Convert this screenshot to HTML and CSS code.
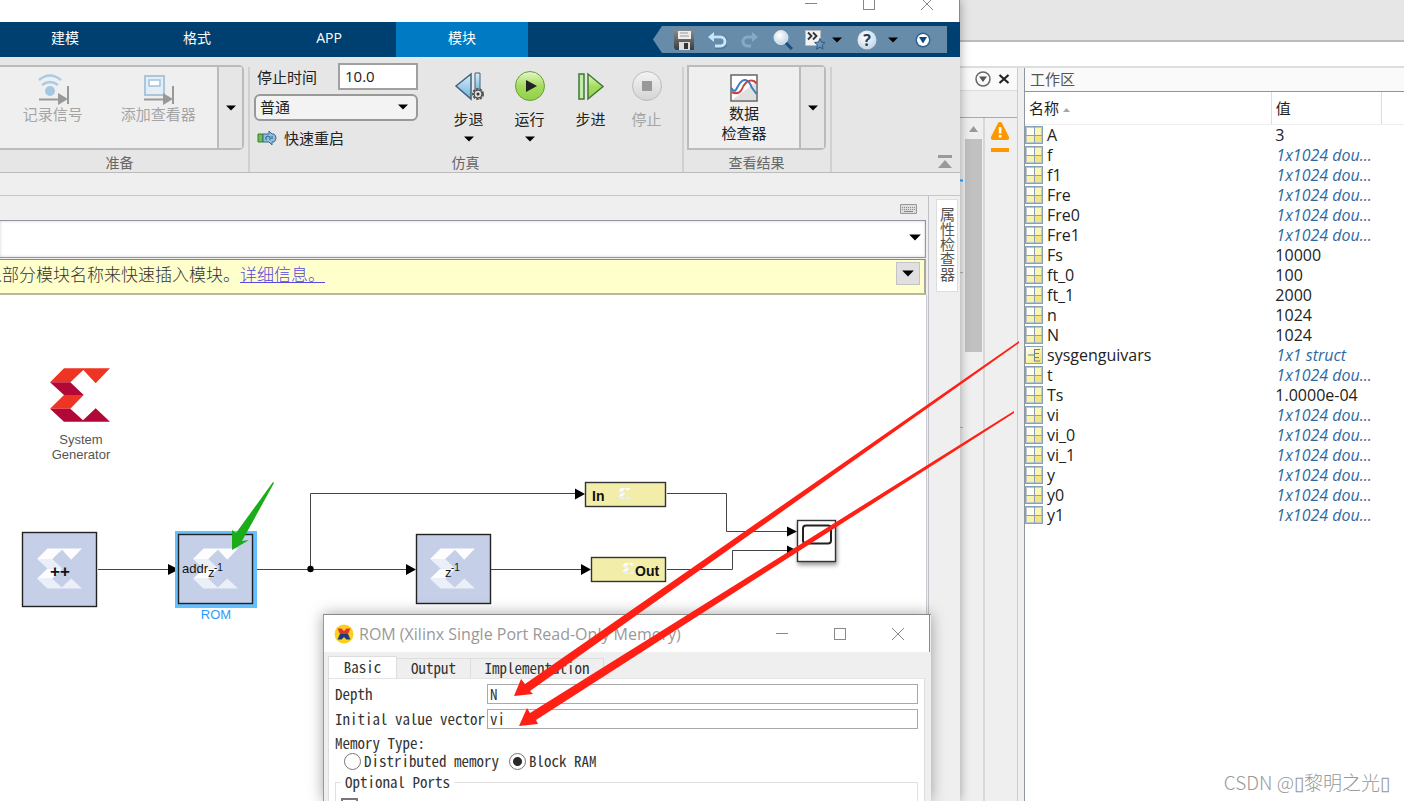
FILE: index.html
```html
<!DOCTYPE html>
<html lang="zh-CN">
<head>
<meta charset="utf-8">
<title>Simulink</title>
<link rel="stylesheet" href="styles.css">
</head>
<body>
<svg class="defs" aria-hidden="true">
  <defs>
    <linearGradient id="gy" x1="0" y1="0" x2="1" y2="1"><stop offset="0.1" stop-color="#fffdf0"/><stop offset="0.5" stop-color="#fbf3a8"/><stop offset="1" stop-color="#f0dc6a"/></linearGradient>
    <linearGradient id="gblue" x1="0" y1="0" x2="0" y2="1"><stop offset="0" stop-color="#d9eefa"/><stop offset="1" stop-color="#6fb1dc"/></linearGradient>
    <linearGradient id="ggreen" x1="0" y1="0" x2="0" y2="1"><stop offset="0" stop-color="#e4f8cc"/><stop offset="0.5" stop-color="#a6dc5e"/><stop offset="1" stop-color="#8fd148"/></linearGradient>
    <linearGradient id="ggray" x1="0" y1="0" x2="0" y2="1"><stop offset="0" stop-color="#f4f4f4"/><stop offset="1" stop-color="#d4d4d4"/></linearGradient>
    <linearGradient id="gdisk" x1="0" y1="0" x2="0" y2="1"><stop offset="0" stop-color="#8b8b8b"/><stop offset="1" stop-color="#3c3c3c"/></linearGradient>
    <radialGradient id="glens" cx="0.4" cy="0.35" r="0.7"><stop offset="0" stop-color="#ffffff"/><stop offset="1" stop-color="#bfd4e4"/></radialGradient>
    <symbol id="matrix" viewBox="0 0 18 18">
      <rect width="18" height="18" fill="#86a1b8"/>
      <path d="M1 1h16v16H1z" fill="#b9c9cf"/>
      <path d="M2 2h7v7H2z" fill="#fffef4"/><path d="M10 2h6v7h-6z" fill="#fcf5b4"/><path d="M2 10h7v6H2z" fill="#fbf2a6"/><path d="M10 10h6v6h-6z" fill="#f5e37e"/>
      <path d="M9.500 1v16M1 9.500h16" stroke="#86a1b8"/>
    </symbol>
    <symbol id="struct" viewBox="0 0 18 18">
      <rect x="0.500" y="0.500" width="17" height="17" fill="url(#gy)" stroke="#86a1b8"/>
      <path d="M3 9h6M9.500 3v12M9 3.500h6M9 7.500h5M9 11.500h5M9 15h6" stroke="#6684a0" fill="none"/>
    </symbol>
    <symbol id="xlogo" viewBox="0 0 180 160">
      <path class="light" d="M42 0H180L137 45L100 5L61 42H0ZM42 80H101L61 121H0Z"/>
      <path class="dark" d="M0 42H61L101 80H42ZM0 121H61L99 156L137 120L180 160H42Z"/>
    </symbol>
    <symbol id="caret" viewBox="0 0 10 6"><path d="M0 0.500H10L5 5.500Z"/></symbol>
  </defs>
</svg>

<div class="desktop">
  <main class="app">
    <header class="titlebar">
      <button class="winbtn" aria-label="最小化"><svg width="14" height="14"><path d="M1 6.500h12"/></svg></button>
      <button class="winbtn" aria-label="最大化"><svg width="14" height="14"><rect x="1.500" y="1.500" width="11" height="11"/></svg></button>
      <button class="winbtn" aria-label="关闭"><svg width="14" height="14"><path d="M1 1l12 12M13 1L1 13"/></svg></button>
    </header>

    <nav class="tabbar">
      <button class="tab">建模</button>
      <button class="tab">格式</button>
      <button class="tab">APP</button>
      <button class="tab active">模块</button>
      <div class="quick">
        <button aria-label="保存"><svg width="20" height="20" viewBox="0 0 20 20"><path d="M0 0h20v20H2l-2-2z" fill="url(#gdisk)"/><path d="M4 1h13v8H4z" fill="#eee"/><path d="M6 3h8M6 6h9" stroke="#999"/><path d="M5 12h11v8H5z" fill="#ddd"/><path d="M10 13h4v6h-4z" fill="#333"/></svg></button>
        <button aria-label="撤销"><svg width="20" height="20" viewBox="0 0 20 20"><path d="M5 7h9a4.500 4.500 0 0 1 0 10H8" fill="none" stroke="#234f78" stroke-width="4" opacity="0.3"/><path d="M5 7h8.500a4.500 4.500 0 0 1 0 9H8" fill="none" stroke="#c6e6f7" stroke-width="3"/><path d="M1 7l6-5v10z" fill="#c6e6f7"/></svg></button>
        <button aria-label="重做"><svg width="20" height="20" viewBox="0 0 20 20"><path d="M13 7H7.500a4.500 4.500 0 0 0 0 9H11" fill="none" stroke="#86aac6" stroke-width="3"/><path d="M18 7l-6-5v10z" fill="#86aac6"/></svg></button>
        <button aria-label="搜索"><svg width="20" height="20" viewBox="0 0 20 20"><path d="M12 12l7 7" stroke="#1c4c80" stroke-width="3"/><circle cx="8" cy="7.500" r="7" fill="url(#glens)" stroke="#d9e5ee"/></svg></button>
        <button aria-label="收藏"><svg width="20" height="20" viewBox="0 0 20 20"><path d="M0.500 0.500h15v15H.5z" fill="#f2f2f2" stroke="#bbb"/><path d="M3 2.500l3.500 3.500L3 9.500M8 2.500l3.500 3.500L8 9.500" fill="none" stroke="#333" stroke-width="1.800"/><path d="M15 8.500l1.400 3.600 3.600.4-2.800 2.600.8 4-3-2-3.400 2 .8-4-2.800-2.600 3.800-.4z" fill="#6a97bd" stroke="#31587f"/></svg></button>
        <button aria-label="收藏菜单"><svg class="caret" width="10" height="6"><use href="#caret"/></svg></button>
        <button aria-label="帮助"><svg width="20" height="20" viewBox="0 0 20 20"><circle cx="10" cy="10" r="9.500" fill="url(#glens)"/><text x="10" y="16" class="helpq">?</text></svg></button>
        <button aria-label="帮助菜单"><svg class="caret" width="10" height="6"><use href="#caret"/></svg></button>
        <button aria-label="更多"><svg width="16" height="16" viewBox="0 0 16 16"><circle cx="8" cy="8" r="7.500" fill="#2d628f"/><circle cx="8" cy="8" r="6" fill="#fff"/><path d="M4 5h8l-4 6.500z" fill="#0f487c"/></svg></button>
      </div>
    </nav>

    <section class="ribbon">
      <div class="group prepare">
        <div class="gallery open-left">
          <button class="tool off"><svg width="32" height="32" viewBox="0 0 32 32"><path d="M2 6q11-9 22 0M5 11q8-6 16 0" fill="none" stroke="#a9cbe4" stroke-width="2.500"/><circle cx="13" cy="17" r="5" fill="#a5c8e2"/><path d="M2 25.500h20M31 12v18" stroke="#999" stroke-width="2"/><path d="M21 19l10 6-10 6z" fill="#999"/></svg><span>记录信号</span></button>
          <button class="tool off"><svg width="32" height="32" viewBox="0 0 32 32"><path d="M3 2h19v19H3z" fill="#e6eef5" stroke="#a9c6dc" stroke-width="2"/><path d="M7 6h11v6H7z" fill="#fff" stroke="#9fc4df" stroke-width="1.500"/><path d="M2 25.500h20M31 12v18" stroke="#999" stroke-width="2"/><path d="M21 19l10 6-10 6z" fill="#999"/></svg><span>添加查看器</span></button>
          <button class="more" aria-label="展开准备"><svg class="caret" width="10" height="6"><use href="#caret"/></svg></button>
        </div>
        <div class="caption">准备</div>
      </div>
      <div class="group simulate">
        <div class="simrow">
          <div class="settings">
            <div class="stop"><label for="stop">停止时间</label><input id="stop" value="10.0"></div>
            <div class="mode"><select aria-label="仿真模式"><option>普通</option></select><svg class="caret" width="10" height="6"><use href="#caret"/></svg></div>
            <button class="restart"><svg width="21" height="16" viewBox="0 0 21 16"><path d="M1 4h5v8H1z" fill="#6cc04a" stroke="#3b7a2a"/><path d="M6 4h6V1l3 3h2q4 4 0 8h-2v3l-3-3H6z" fill="#8dbfe0" stroke="#3b688c"/><path d="M9 10V7q2-2 4 0v3M15 6v3" stroke="#315c80" fill="none"/></svg><span>快速重启</span></button>
          </div>
          <button class="run"><svg width="32" height="32" viewBox="0 0 32 32"><path d="M3 16L18 4v25z" fill="url(#gblue)" stroke="#40617c" stroke-width="1.500"/><path d="M22 3h5v19h-5z" fill="url(#gblue)" stroke="#40617c"/><circle cx="25" cy="24" r="5" fill="#ddd" stroke="#555" stroke-width="2" stroke-dasharray="2.500 1"/><circle cx="25" cy="24" r="4" fill="#ddd" stroke="#444"/><circle cx="25" cy="24" r="1.500" fill="#333"/></svg><span>步退</span><svg class="caret" width="10" height="6"><use href="#caret"/></svg></button>
          <button class="run"><svg width="32" height="32" viewBox="0 0 32 32"><circle cx="16" cy="16" r="14.500" fill="url(#ggreen)" stroke="#689e38"/><path d="M12 10l11 6-11 6z" fill="#222"/></svg><span>运行</span><svg class="caret" width="10" height="6"><use href="#caret"/></svg></button>
          <button class="run"><svg width="32" height="32" viewBox="0 0 32 32"><path d="M4 4h5v25H4z" fill="#c5eba8" stroke="#3c7a36" stroke-width="1.500"/><path d="M13 4v25l15-12.500z" fill="url(#ggreen)" stroke="#3c7a36" stroke-width="1.500"/></svg><span>步进</span></button>
          <button class="run off"><svg width="32" height="32" viewBox="0 0 32 32"><circle cx="16" cy="16" r="14.500" fill="url(#ggray)" stroke="#bbb"/><path d="M11 11h10v10H11z" fill="#999"/></svg><span>停止</span></button>
        </div>
        <div class="caption">仿真</div>
      </div>
      <div class="group results">
        <div class="gallery">
          <button class="tool"><svg width="28" height="28" viewBox="0 0 28 28"><path d="M1 1h26v26H1z" fill="#fff" stroke="#666" stroke-width="1.500"/><path d="M2 26L26 8v18z" fill="#e0e0e0"/><path d="M1.500 14q3 6 6-1q4-8 8-7t6 7l5 7" fill="none" stroke="#3c7fc0" stroke-width="2"/><path d="M1.500 18q7 3 10-2q4-10 10-9.500q3 0 5 3" fill="none" stroke="#c94442" stroke-width="2"/></svg><span>数据<br>检查器</span></button>
          <button class="more" aria-label="展开查看结果"><svg class="caret" width="10" height="6"><use href="#caret"/></svg></button>
        </div>
        <div class="caption">查看结果</div>
      </div>
      <button class="collapse" aria-label="折叠"><svg width="14" height="14"><path d="M0 0h14v3H0zM7 5l7 8H0z" fill="#999"/></svg></button>
    </section>

    <div class="strip"></div>

    <div class="work">
      <div class="editor">
        <div class="keys"><svg width="17" height="10" viewBox="0 0 17 10"><path d="M0.500 0.500h16v9H.5z" fill="#ddd" stroke="#999"/><path d="M2 3.500h13M2 5.500h13" stroke="#888" stroke-dasharray="1 1"/><path d="M4 7.500h9" stroke="#888"/></svg></div>
        <div class="address"><button aria-label="路径"><svg class="caret" width="12" height="7"><use href="#caret"/></svg></button></div>
        <div class="banner"><p>入部分模块名称来快速插入模块。<a href="#more">详细信息。</a></p><button aria-label="提示菜单"><svg class="caret" width="12" height="7"><use href="#caret"/></svg></button></div>
        <div class="canvas">
          <svg class="diagram" width="928" height="506" viewBox="0 295 928 506">
            <g class="brand"><use href="#xlogo" x="50" y="368" width="60" height="54"/></g>
            <text x="81" y="444" class="label">System</text>
            <text x="81" y="459" class="label">Generator</text>

            <g class="wire">
              <path d="M98 569.500H170M257 569.500H406M310.500 569.500V493.500H576M491 569.500H582M667 493.500H726.500V531.500H788M667 569.500H732.500V550.500H788"/>
            </g>
            <g class="heads">
              <path d="M168 564l11 5.500-11 5.500zM406 564l10 5.500-10 5.500zM575 488.500l10 5.500-10 5.500zM581 564l10 5.500-10 5.500zM787 526.500l10 5-10 5zM787 545.500l10 5-10 5z"/>
              <circle cx="310.500" cy="569" r="3.200"/>
            </g>

            <rect x="22.500" y="532.500" width="74" height="74" class="block"/>
            <g class="ghost"><use href="#xlogo" x="37" y="548" width="45" height="41"/></g>
            <text x="60" y="577" class="plus">++</text>

            <rect x="177" y="533" width="78" height="73" class="halo"/>
            <rect x="178.500" y="534.500" width="74" height="69" class="block"/>
            <g class="ghost"><use href="#xlogo" x="193" y="548" width="45" height="41"/></g>
            <text x="182" y="573" class="port">addr</text>
            <text x="208" y="577" class="port">z</text><text x="214" y="571" class="sup">-1</text>
            <text x="216" y="619" class="romname">ROM</text>

            <rect x="416.500" y="534.500" width="74" height="69" class="block"/>
            <g class="ghost"><use href="#xlogo" x="430" y="548" width="45" height="41"/></g>
            <text x="445" y="577" class="port">z</text><text x="451" y="571" class="sup">-1</text>

            <rect x="585.500" y="482.500" width="80" height="24" class="gate"/>
            <g class="ghost"><use href="#xlogo" x="618" y="488" width="13" height="11"/></g>
            <text x="592" y="501" class="gatename">In</text>
            <rect x="591.500" y="557.500" width="74" height="24" class="gate"/>
            <g class="ghost"><use href="#xlogo" x="622" y="563" width="13" height="11"/></g>
            <text x="635" y="576" class="gatename">Out</text>

            <rect x="797.500" y="520.500" width="38" height="41" class="scope"/>
            <rect x="803" y="525.500" width="28" height="18" rx="3" class="screen"/>
          </svg>
        </div>
      </div>
      <aside class="side"><button class="inspector">属性检查器</button></aside>
    </div>

    <section class="dialog">
      <header>
        <svg width="20" height="20" viewBox="0 0 20 20"><circle cx="10" cy="10" r="9.500" fill="#fdd020"/><path d="M3.500 4.500h4l2.500 2.500 2.500-2.500h4l-2.500 5.500H6z" fill="#e3342c"/><path d="M3.500 15.500h4l2.500-2.500 2.500 2.500h4l-2.500-5.500H6z" fill="#1d3c7c"/></svg>
        <h1>ROM (Xilinx Single Port Read-Only Memory)</h1>
        <button class="winbtn" aria-label="最小化"><svg width="14" height="14"><path d="M1 6.500h12"/></svg></button>
        <button class="winbtn" aria-label="最大化"><svg width="14" height="14"><rect x="1.500" y="1.500" width="11" height="11"/></svg></button>
        <button class="winbtn" aria-label="关闭"><svg width="14" height="14"><path d="M1 1l12 12M13 1L1 13"/></svg></button>
      </header>
      <div class="dlgbody">
        <div class="dlgtabs">
          <button class="on">Basic</button><button>Output</button><button>Implementation</button>
        </div>
        <form class="panel">
          <div class="field"><label for="depth">Depth</label><input id="depth" value="N"></div>
          <div class="field"><label for="vec">Initial value vector</label><input id="vec" value="vi"></div>
          <div class="heading">Memory Type:</div>
          <div class="radios">
            <label><input type="radio" name="mem">Distributed memory</label>
            <label><input type="radio" name="mem" checked>Block RAM</label>
          </div>
          <fieldset><legend>Optional Ports</legend><input type="checkbox" aria-label="Optional port"></fieldset>
        </form>
      </div>
    </section>
  </main>

  <section class="matlab">
    <div class="topstrip"></div>
    <div class="pathbar"></div>
    <div class="panes">
      <div class="script">
        <header><svg width="16" height="16"><circle cx="8" cy="8" r="7" fill="none" stroke="#666" stroke-width="1.500"/><path d="M4 5.500h8L8 11z" fill="#555"/></svg><svg width="12" height="12"><path d="M1.500 2l9 8M10.500 2l-9 8" stroke="#222" stroke-width="2.200"/></svg></header>
        <div class="scripttabs"></div>
        <div class="scriptbody">
          <div class="scroll"><svg width="9" height="6"><path d="M4.500 0L9 6H0z" fill="#999"/></svg><i></i></div>
          <div class="messages"><svg width="20" height="20" viewBox="0 0 20 20"><path d="M10 1q1.500 0 2 1l7 14q.5 3-2 3H3q-2.500 0-2-3L8 2q.5-1 2-1z" fill="#ff9800"/><path d="M8.800 6h2.600v6.500H8.800zM8.800 14h2.600v2.500H8.800z" fill="#fff"/></svg><i></i></div>
        </div>
      </div>
      <div class="workspace">
        <h2>工作区</h2>
        <table>
          <thead><tr><th class="cname">名称 <svg width="7" height="4"><path d="M3.500 0L7 4H0z" fill="#a9a998"/></svg></th><th class="cval">值</th><th></th></tr></thead>
          <tbody>
            <tr><td><svg><use href="#matrix"/></svg>A</td><td>3</td><td></td></tr>
            <tr><td><svg><use href="#matrix"/></svg>f</td><td><em>1x1024 dou...</em></td><td></td></tr>
            <tr><td><svg><use href="#matrix"/></svg>f1</td><td><em>1x1024 dou...</em></td><td></td></tr>
            <tr><td><svg><use href="#matrix"/></svg>Fre</td><td><em>1x1024 dou...</em></td><td></td></tr>
            <tr><td><svg><use href="#matrix"/></svg>Fre0</td><td><em>1x1024 dou...</em></td><td></td></tr>
            <tr><td><svg><use href="#matrix"/></svg>Fre1</td><td><em>1x1024 dou...</em></td><td></td></tr>
            <tr><td><svg><use href="#matrix"/></svg>Fs</td><td>10000</td><td></td></tr>
            <tr><td><svg><use href="#matrix"/></svg>ft_0</td><td>100</td><td></td></tr>
            <tr><td><svg><use href="#matrix"/></svg>ft_1</td><td>2000</td><td></td></tr>
            <tr><td><svg><use href="#matrix"/></svg>n</td><td>1024</td><td></td></tr>
            <tr><td><svg><use href="#matrix"/></svg>N</td><td>1024</td><td></td></tr>
            <tr><td><svg><use href="#struct"/></svg>sysgenguivars</td><td><em>1x1 struct</em></td><td></td></tr>
            <tr><td><svg><use href="#matrix"/></svg>t</td><td><em>1x1024 dou...</em></td><td></td></tr>
            <tr><td><svg><use href="#matrix"/></svg>Ts</td><td>1.0000e-04</td><td></td></tr>
            <tr><td><svg><use href="#matrix"/></svg>vi</td><td><em>1x1024 dou...</em></td><td></td></tr>
            <tr><td><svg><use href="#matrix"/></svg>vi_0</td><td><em>1x1024 dou...</em></td><td></td></tr>
            <tr><td><svg><use href="#matrix"/></svg>vi_1</td><td><em>1x1024 dou...</em></td><td></td></tr>
            <tr><td><svg><use href="#matrix"/></svg>y</td><td><em>1x1024 dou...</em></td><td></td></tr>
            <tr><td><svg><use href="#matrix"/></svg>y0</td><td><em>1x1024 dou...</em></td><td></td></tr>
            <tr><td><svg><use href="#matrix"/></svg>y1</td><td><em>1x1024 dou...</em></td><td></td></tr>
          </tbody>
        </table>
      </div>
    </div>
  </section>

  <svg class="notes" width="1404" height="801" viewBox="0 0 1404 801" aria-hidden="true">
    <path d="M960 180.500h3" stroke="#1a8fe8" stroke-width="2"/>
    <path d="M960 272.500h3M960 427.500h3" stroke="#999"/>
    <path d="M514 696L521 679L525 684L1019 341V343L530 691L533 694Z" fill="#ff2015"/>
    <path d="M519 726L527 708L530 713L1014 411V413L536 720L538 724Z" fill="#ff2015"/>
    <path d="M232 550V530L236 533L273 482L274 483L242 541L249 540Z" fill="#1aad19"/>
  </svg>
  <div class="watermark">CSDN @▯黎明之光▯</div>
</div>
</body>
</html>
```
FILE: styles.css
```css
* { box-sizing: border-box; }
body {
  margin: 0;
  font: 15px/20px "Open Sans", "Noto Sans CJK SC", sans-serif;
  color: #222;
  overflow: hidden;
}
button, input, select { font: inherit; color: inherit; margin: 0; }
button { border: 0; background: none; padding: 0; }
svg { display: block; flex: none; }
.defs { position: absolute; width: 0; height: 0; }
.caret { fill: #000; }

.desktop {
  position: relative;
  display: grid;
  grid-template-columns: 960fr 444fr;
  height: 100vh;
  min-height: 801px;
  overflow: hidden;
}

/* Simulink window */
.app {
  position: relative;
  z-index: 1;
  display: flex;
  flex-direction: column;
  background: #efefef;
  box-shadow: 0 0 10px rgba(0, 0, 0, 0.35);
  min-width: 0;
}
.titlebar {
  display: flex;
  justify-content: flex-end;
  align-items: flex-start;
  height: 22px;
  padding-right: 3px;
  background: #fff;
  border-right: 1px solid #888;
  overflow: hidden;
}
.winbtn { width: 58px; display: flex; justify-content: center; }
.winbtn svg { fill: none; stroke: #888; }
.titlebar .winbtn { margin-top: -3px; }

.tabbar { display: flex; height: 35px; background: #004071; }
.tab { width: 132px; padding: 0 2px 4px 0; color: #fff; font-size: 14px; }
.tab.active { background: #007bc3; padding-right: 0; }
.quick {
  display: flex;
  align-items: center;
  gap: 13px;
  margin: 4px 13px 4px auto;
  width: 294px;
  padding-left: 21px;
  background: #678caa;
  clip-path: polygon(9px 0, 100% 0, 100% 100%, 9px 100%, 0 50%);
}
.quick button:nth-child(4) { margin-right: -1px; }
.quick button:nth-child(5) { margin-right: -6px; }
.quick button:nth-child(7) { margin-right: -2px; margin-left: 2px; }
.quick button:nth-child(9) { margin-left: 4px; }
.helpq { font: bold 16px "Open Sans", sans-serif; text-anchor: middle; fill: #26405c; }

.ribbon { display: flex; height: 116px; background: #e6e6e6; border-bottom: 1px solid #bbb; }
.group {
  display: flex;
  flex-direction: column;
  justify-content: space-between;
  padding-top: 8px;
  background: linear-gradient(#d0d0d0, #d0d0d0) right 10px / 2px 100% no-repeat;
}
.caption { font-size: 14px; line-height: 18px; color: #666; text-align: center; }
.prepare { width: 250px; padding-right: 6px; }
.prepare .caption { padding-right: 5px; }
.simulate { width: 434px; padding: 6px 2px 0 4px; }
.simulate .caption { padding-right: 5px; }
.results { width: 148px; padding-left: 3px; padding-right: 6px; }
.gallery {
  display: flex;
  height: 85px;
  border: 2px solid #bbb;
  border-radius: 0 5px 5px 0;
  background: #efefef;
}
.open-left { border-left: 0; }
.tool { flex: 1; display: flex; flex-direction: column; align-items: center; justify-content: flex-start; padding-top: 7px; }
.tool.off { color: #a5a5a5; }
.prepare .tool span { line-height: 16px; }
.prepare .tool:nth-child(2) { padding-right: 6px; }
.results .tool { gap: 1px; }
.more { width: 25px; display: grid; place-items: center; border-left: 2px solid #bbb; background: #e6e6e6; }
.simrow { display: flex; align-items: flex-start; }
.settings { width: 164px; margin-right: 20px; display: flex; flex-direction: column; gap: 4px; }
.stop { display: flex; justify-content: space-between; align-items: center; padding-left: 3px; }
.stop input { width: 80px; height: 27px; border: 2px solid #a0a0a0; background: #fff; padding: 0 5px 2px; }
.mode { position: relative; }
.mode select {
  display: block;
  width: 100%;
  height: 27px;
  padding: 0 4px 2px;
  appearance: none;
  border: 2px solid #999;
  border-radius: 6px;
  background: #f3f3f3;
}
.mode svg { position: absolute; right: 10px; top: 10px; }
.restart { display: flex; align-items: center; gap: 6px; padding: 3px; }
.run { width: 61px; display: flex; flex-direction: column; align-items: center; gap: 7px; padding-top: 7px; }
.run.off { width: 51px; color: #a5a5a5; }
.collapse { margin-left: auto; align-self: flex-end; padding: 0 8px 3px; }

.strip { height: 23px; border-bottom: 1px solid #c8c8c8; }
.work { flex: 1; display: flex; min-height: 0; }
.editor { flex: 1; display: flex; flex-direction: column; min-width: 0; border-right: 1px solid #c0c0c8; }
.keys { height: 24px; display: flex; justify-content: flex-end; align-items: center; padding: 2px 11px 0; }
.address {
  height: 38px;
  margin-right: 2px;
  display: flex;
  justify-content: flex-end;
  align-items: center;
  padding: 0 4px 4px;
  background: #fff;
  border: 1px solid #95959f;
  border-left: 0;
  box-shadow: inset 0 0 3px #ccc;
}
.banner {
  height: 36px;
  margin: 1px 2px 0 0;
  display: flex;
  justify-content: space-between;
  background: #ffc;
  border: 1px solid #888;
  border-width: 1px 2px 2px 0;
  border-color: #888 #aaa89a #b8b8a0;
  padding: 2px 4px 0 0;
}
.banner p { margin: 0; text-indent: -15px; font-size: 17px; line-height: 24px; font-family: "Noto Sans CJK SC", sans-serif; font-weight: 300; white-space: nowrap; color: #333; }
.banner a { color: #5648e0; }
.banner button { width: 24px; height: 23px; display: grid; place-items: center; background: #e0e0e0; border: 1px solid #c4c4c4; }
.canvas { flex: 1; background: #fff; overflow: hidden; margin-right: 1px; border-right: 1px solid #c8c8d0; }
.side { width: 31px; padding: 3px 2px 0 7px; }
.inspector { writing-mode: vertical-rl; width: 22px; height: 93px; padding-bottom: 2px; background: #fff; border: 1px solid #ddd; color: #555; }

/* model diagram */
.diagram text { font-family: "Liberation Sans", Arial, sans-serif; fill: #111; }
.diagram .label { font-size: 13px; text-anchor: middle; fill: #555; }
.diagram .romname { font-size: 13px; text-anchor: middle; fill: #2d9cf5; }
.diagram .port { font-size: 13px; }
.diagram .sup { font-size: 10px; }
.diagram .plus { font-size: 17px; font-weight: bold; text-anchor: middle; }
.diagram .gatename { font-size: 14px; font-weight: bold; }
.wire { fill: none; stroke: #444; }
.heads { fill: #000; }
.block { fill: #c5cfe8; stroke: #222; stroke-width: 1.4; }
.halo { fill: none; stroke: #66bfff; stroke-width: 4; }
.gate { fill: #f2eda8; stroke: #333; stroke-width: 1.4; }
.brand { --light: #ee3524; --dark: #b20838; }
.ghost { --light: #fdfdff; --dark: #ebeff8; }
.light { fill: var(--light); }
.dark { fill: var(--dark); }
.scope { fill: #fff; stroke: #333; stroke-width: 1.4; filter: drop-shadow(1px 3px 2px rgba(0, 0, 0, 0.4)); }
.screen { fill: #fff; stroke: #222; stroke-width: 2; }

/* block parameter dialog */
.dialog {
  position: absolute;
  left: 323px;
  top: 614px;
  bottom: 0;
  width: 608px;
  display: flex;
  flex-direction: column;
  overflow: visible;
  background: #efefef;
  border-top: 1px solid #888;
  border-left: 1px solid #999;
  box-shadow: 0 0 14px rgba(0, 0, 0, 0.35);
}
.dialog header { display: flex; align-items: center; flex: none; height: 37px; padding: 0 2px 0 10px; margin-right: 1px; background: #fff; border-right: 1px solid #888; }
.dialog h1 { flex: 1; margin: 0 0 0 5px; font-size: 16px; font-weight: 400; color: #999; white-space: nowrap; }
.dlgbody { flex: 1; min-height: 0; overflow: hidden; padding: 4px 6px 0 4px; font: 15px/16px "Noto Sans Mono CJK SC", "Liberation Mono", monospace; color: #333; }
.dlgtabs { display: flex; align-items: flex-end; }
.dlgtabs button { height: 20px; border: 1px solid #ddd; border-bottom: 0; border-left: 0; line-height: 16px; padding-bottom: 2px; width: 74px; }
.dlgtabs button:last-child { width: 133px; }
.dlgtabs button.on { width: 69px; height: 22px; background: #fff; border-left: 1px solid #ddd; }
.panel { height: 200px; padding: 6px 6px 0; background: #fff; border: 1px solid #ddd; border-top-width: 0; box-shadow: inset 0 1px #e4e4e4; }
.field { display: flex; align-items: center; height: 20px; margin-bottom: 5px; }
.field label { width: 152px; white-space: nowrap; }
.field input { flex: 1; min-width: 0; height: 20px; padding: 0 2px 2px; border: 1px solid #aaa; background: #fff; }
.heading { padding-top: 1px; }
.radios { display: flex; gap: 10px; padding-left: 9px; height: 20px; align-items: center; }
.radios label { display: flex; align-items: center; gap: 3px; white-space: nowrap; }
.radios input { appearance: none; width: 17px; height: 17px; border: 1px solid #777; border-radius: 50%; background: #fff; }
.radios input:checked { background: radial-gradient(circle, #2a2a2a 4px, #fff 5px); }
fieldset { margin: 3px 0 0; padding: 8px 5px; height: 100px; border: 1px solid #e0e0e0; }
legend { padding: 0 4px; }
fieldset input { appearance: none; display: block; width: 17px; height: 17px; border: 2px solid #777; }

/* MATLAB window behind */
.matlab { display: flex; flex-direction: column; background: #efefef; min-width: 0; }
.topstrip { flex: none; height: 42px; background: #e6e6e6; border-bottom: 2px solid #bcbcbc; }
.pathbar { flex: none; height: 24px; background: #fff; }
.panes { flex: 1; display: flex; min-height: 0; border-top: 2px solid #ddd; gap: 6px; }
.script { width: 58px; display: flex; flex-direction: column; border-right: 1px solid #ccc; }
.script header { display: flex; align-items: center; justify-content: flex-end; gap: 7px; height: 23px; padding-right: 7px; background: #fafafa; border-bottom: 1px solid #ddd; }
.scripttabs { height: 27px; border-bottom: 1px solid #aaa; }
.scriptbody { flex: 1; display: flex; }
.scroll { width: 25px; padding: 8px 2px 0 5px; border-right: 2px solid #d8d8d8; display: flex; flex-direction: column; align-items: center; gap: 7px; }
.scroll i { width: 17px; height: 213px; background: #c1c1c1; }
.messages { padding: 3px 0 0 5px; display: flex; flex-direction: column; align-items: center; gap: 7px; }
.messages i { width: 18px; height: 4px; background: #ff9800; }
.workspace { flex: 1; background: #fff; border-left: 1px solid #8f969e; }
.workspace h2 { margin: 0; height: 24px; padding: 0 5px; font-size: 15px; font-weight: 400; line-height: 22px; color: #555; background: #fafafa; border-bottom: 1px solid #8f949a; }
.workspace table { width: 100%; border-collapse: collapse; table-layout: fixed; }
.workspace th { height: 32px; padding: 0 4px; font-weight: 400; text-align: left; border-bottom: 1px solid #eee; border-right: 1px solid #ddd; }
.workspace th:last-child { border-right: 0; }
.workspace th svg { display: inline-block; vertical-align: middle; }
.cname { width: 65%; }
.cval { width: 29%; }
.workspace td { height: 20px; padding: 0 4px; font-size: 16px; line-height: 20px; white-space: nowrap; vertical-align: top; }
.workspace td:first-child { padding: 0; }
.workspace td svg { display: inline-block; vertical-align: top; width: 18px; height: 18px; margin: 1px 4px 0 0; }
.workspace em { color: #2d6a9f; padding-left: 1px; }

.notes { position: absolute; left: 0; top: 0; z-index: 2; pointer-events: none; }
.watermark { position: absolute; right: 14px; bottom: 7px; z-index: 2; font: 19px/24px "Noto Sans CJK SC", "DejaVu Sans", sans-serif; font-weight: 300; color: #999; }
```
